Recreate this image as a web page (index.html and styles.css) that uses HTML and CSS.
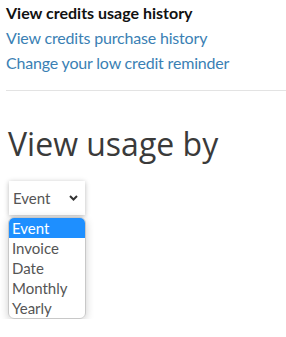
FILE: index.html
```html
<!DOCTYPE html>
<html lang="en">
<head>
  <meta charset="UTF-8">
  <title>Credits</title>
  <link rel="stylesheet" href="styles.css">
</head>
<body>
  <div class="page">
    <ul class="links">
      <li class="current">View credits usage history</li>
      <li><a href="#">View credits purchase history</a></li>
      <li><a href="#">Change your low credit reminder</a></li>
    </ul>
    <hr class="divider">

    <h2>View usage by</h2>

    <div class="picker">
      <div class="select">
        <span>Event</span>
        <svg class="chevron" width="9" height="6" viewBox="0 0 9 6">
          <path d="M1 1 L4.5 4.5 L8 1" fill="none" stroke="#333" stroke-width="2"/>
        </svg>
      </div>
      <ul class="options">
        <li class="selected">Event</li>
        <li>Invoice</li>
        <li>Date</li>
        <li>Monthly</li>
        <li>Yearly</li>
      </ul>
    </div>
  </div>
</body>
</html>
```

FILE: styles.css
```css
body {
  margin: 0;
  background: #fff;
  font-family: Lato, "Open Sans", sans-serif;
}

.page {
  padding: 0 0 0 6px;
}

.links {
  list-style: none;
  margin: 0;
  padding: 0;
  font-size: 16px;
  line-height: 25px;
}

.links .current {
  font-weight: bold;
  color: #111;
}

.links a {
  color: #3a7fb4;
  letter-spacing: -0.18px;
  text-decoration: none;
}

.divider {
  border: none;
  border-top: 1px solid #e3e3e3;
  margin: 15px 0 0 0;
}

h2 {
  font-family: "Open Sans", sans-serif;
  font-weight: normal;
  font-size: 32px;
  color: #3a3a3a;
  margin: 33px 0 0 2px;
  line-height: 40px;
}

.picker {
  margin: 17px 0 0 2px;
  width: 78px;
}

.select {
  height: 34px;
  margin-left: 1px;
  width: 76px;
  display: flex;
  align-items: center;
  justify-content: space-between;
  padding: 0 7px 0 4px;
  box-sizing: border-box;
  background: #fff;
  box-shadow: 0 1px 5px rgba(0,0,0,0.28);
  color: #555;
  font-size: 15px;
}

.options {
  list-style: none;
  margin: 2px 0 0 0;
  padding: 0;
  border: 1px solid #c8c8c8;
  border-radius: 6px;
  overflow: hidden;
  box-shadow: 0 2px 8px rgba(0,0,0,0.2);
  font-size: 15px;
  color: #555;
}

.options li {
  height: 20px;
  line-height: 20px;
  padding-left: 3px;
}

.options .selected {
  background: #1e8fff;
  color: #fff;
}
```
